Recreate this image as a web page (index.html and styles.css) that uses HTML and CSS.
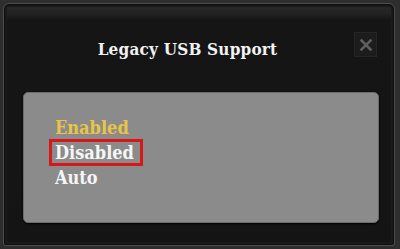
FILE: index.html
```html
<!DOCTYPE html>
<html>
<head>
<meta charset="utf-8">
<link rel="stylesheet" href="styles.css">
</head>
<body>
<div class="window">
  <div class="header">
    <div class="title">Legacy USB Support</div>
    <div class="close">
      <svg width="14" height="14" viewBox="0 0 14 14"><path d="M2.5 2.5 L11.5 11.5 M11.5 2.5 L2.5 11.5" stroke="#5e5e5e" stroke-width="2.6" stroke-linecap="square"/></svg>
    </div>
  </div>
  <div class="panel">
    <div class="option enabled">Enabled</div>
    <div class="option selected">Disabled</div>
    <div class="option">Auto</div>
  </div>
</div>
</body>
</html>
```
FILE: styles.css
```css
html, body { margin: 0; padding: 0; }
body {
  width: 400px;
  height: 249px;
  background: #2e2e2e;
  padding: 3px 0 0 3px;
  box-sizing: border-box;
  overflow: hidden;
}
.window {
  width: 392px;
  height: 243px;
  box-sizing: border-box;
  border: 1px solid #4e4e4e;
  border-radius: 6px 6px 3px 3px;
  background: linear-gradient(#2a2a2a 0, #222 10px, #151515 16px, #141414 100%);
  box-shadow: inset 0 0 0 1px #0c0c0c, inset 0 0 0 3px #1a1a1a;
  display: flex;
  flex-direction: column;
}
.header {
  height: 88px;
  display: flex;
  align-items: flex-start;
  padding-left: 17px;
}
.title {
  flex: 1;
  text-align: center;
  font-family: "DejaVu Serif Condensed", "DejaVu Serif", serif;
  font-stretch: condensed;
  font-weight: bold;
  font-size: 17px;
  color: #f2f2f2;
  padding-top: 35px;
  line-height: 20px;
  letter-spacing: 0.2px;
}
.close {
  width: 21px;
  height: 23px;
  margin-top: 28px;
  margin-right: 17px;
  background: #1c1c1c;
  border: 1px solid #252525;
  display: flex;
  align-items: center;
  justify-content: center;
}
.panel {
  margin: 0 15px 0 19px;
  height: 131px;
  box-sizing: border-box;
  background: #8b8b8b;
  border: 1px solid #6c6c6c;
  border-radius: 5px;
  box-shadow: 0 1px 2px #000;
  padding: 21px 0 0 25px;
}
.option {
  width: fit-content;
  border: 3px solid transparent;
  padding: 0 6px 0 3px;
  font-family: "DejaVu Serif Condensed", "DejaVu Serif", serif;
  font-stretch: condensed;
  font-weight: bold;
  font-size: 18px;
  line-height: 21px;
  color: #f6f6f6;
}
.option + .option { margin-top: -2px; }
.option.enabled { color: #e9c547; }
.option.selected { border-color: #d81818; }
```
